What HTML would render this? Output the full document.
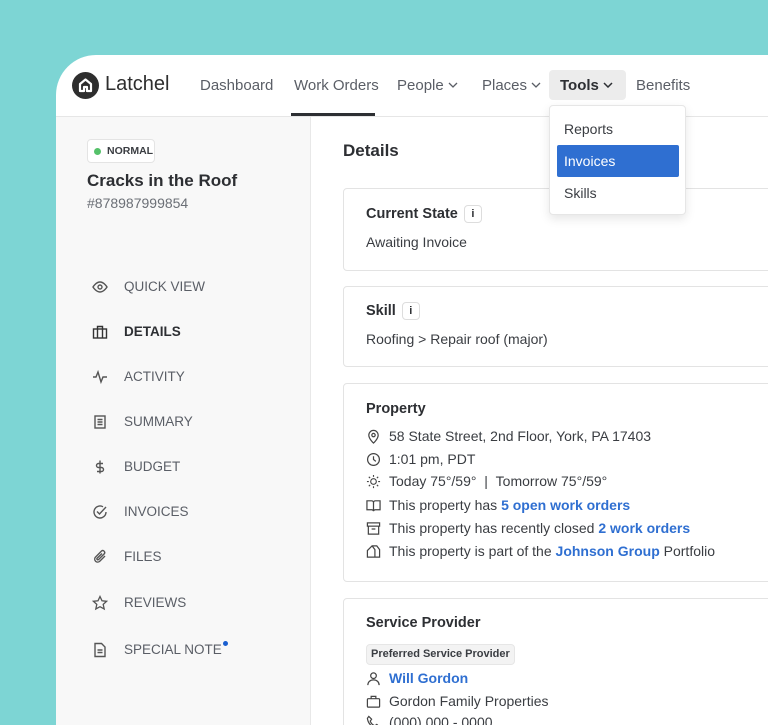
<!DOCTYPE html>
<html><head><meta charset="utf-8"><style>
*{box-sizing:border-box;margin:0;padding:0}
html{overflow:hidden}
body{width:768px;height:725px;overflow:hidden;background:#7dd5d4;font-family:"Liberation Sans",sans-serif;color:#2d2f33;position:relative}
.panel{position:absolute;left:56px;top:55px;width:712px;height:670px;background:#fff;border-top-left-radius:40px;overflow:hidden}
.hdr{position:absolute;left:0;top:0;right:0;height:62px;border-bottom:1px solid #e6e6e6}
.nav{position:absolute;top:22px;font-size:15px;color:#5a5e66;white-space:nowrap}
.nav svg{margin-left:4px;vertical-align:2px}
.side{position:absolute;left:0;top:62px;width:255px;height:700px;background:#f8f8f8;border-right:1px solid #e8e8e8}
.card{position:absolute;left:287px;width:480px;border:1px solid #e3e3e3;border-radius:4px;background:#fff}
.ct{position:absolute;left:22px;font-size:14.5px;color:#2d2f33;font-weight:bold}
.row{position:absolute;left:22px;font-size:14px;color:#3a3d42;display:flex;align-items:center;white-space:nowrap}
.row svg{margin-right:8px}
a{color:#2f6fd1;text-decoration:none;font-weight:bold}
.si{position:absolute;left:36px;font-size:13.5px;color:#5a5e66;display:flex;align-items:center}
.si svg{position:absolute;left:0;top:-8px}
.si span{position:absolute;left:32px;top:-8px;white-space:nowrap}
.info{display:inline-block;width:18px;height:18px;border:1px solid #ddd;border-radius:4px;font-size:11px;text-align:center;line-height:16px;font-weight:bold;margin-left:6px;vertical-align:middle}
</style></head><body>
<div class="panel">
<div class="hdr">
 <svg style="position:absolute;left:16px;top:17px" width="27" height="27" viewBox="0 0 27 27"><circle cx="13.5" cy="13.5" r="13.5" fill="#2e2e2e"/><path d="M8 19V12l5.5-4.5L19 12v7h-4v-4h-3v4z" fill="none" stroke="#fff" stroke-width="2.2" stroke-linejoin="round"/></svg>
 <div style="position:absolute;left:49px;top:18px;font-size:20px;color:#2e2e2e">Latchel</div>
 <div class="nav" style="left:144px">Dashboard</div>
 <div class="nav" style="left:238px">Work Orders</div>
 <div style="position:absolute;left:235px;top:58px;width:84px;height:3px;background:#2d2f33"></div>
 <div class="nav" style="left:341px">People<svg width="10" height="6" viewBox="0 0 10 6"><path d="M1 1l4 4 4-4" fill="none" stroke="#5a5e66" stroke-width="1.3"/></svg></div>
 <div class="nav" style="left:426px">Places<svg width="10" height="6" viewBox="0 0 10 6"><path d="M1 1l4 4 4-4" fill="none" stroke="#5a5e66" stroke-width="1.3"/></svg></div>
 <div style="position:absolute;left:493px;top:15px;width:77px;height:30px;background:#ececec;border-radius:4px"></div>
 <div class="nav" style="left:504px;color:#2d2f33;font-weight:bold">Tools<svg width="10" height="6" viewBox="0 0 10 6"><path d="M1 1l4 4 4-4" fill="none" stroke="#2d2f33" stroke-width="1.5"/></svg></div>
 <div class="nav" style="left:580px">Benefits</div>
</div>
<div class="side">
 <div style="position:absolute;left:31px;top:22px;width:68px;height:24px;border:1px solid #e4e4e4;border-radius:4px;background:#fff;font-size:10.5px;font-weight:bold;color:#3a3d42;line-height:22px;padding-left:19px">NORMAL<span style="position:absolute;left:6px;top:8px;width:7px;height:7px;border-radius:50%;background:#55c16a"></span></div>
 <div style="position:absolute;left:31px;top:54px;font-size:17px;font-weight:bold;color:#2d2f33">Cracks in the Roof</div>
 <div style="position:absolute;left:31px;top:78px;font-size:14px;color:#6b6f76">#878987999854</div>
 <div class="si" style="top:170px"><svg width="16" height="16" viewBox="0 0 16 16" fill="none" stroke="#555" stroke-width="1.4"><path d="M1 8s3-5 7-5 7 5 7 5-3 5-7 5-7-5-7-5z"/><circle cx="8" cy="8" r="2"/></svg><span>QUICK VIEW</span></div>
 <div class="si" style="top:215px;color:#2d2f33;font-weight:bold"><svg width="16" height="16" viewBox="0 0 16 16" fill="none" stroke="#333" stroke-width="1.4"><rect x="1.5" y="5" width="13" height="9"/><path d="M5.5 5V2.5h5V5M5.5 5v9M10.5 5v9"/></svg><span>DETAILS</span></div>
 <div class="si" style="top:260px"><svg width="16" height="16" viewBox="0 0 16 16" fill="none" stroke="#555" stroke-width="1.4"><path d="M1 8h3l2-5 3 10 2-5h4"/></svg><span>ACTIVITY</span></div>
 <div class="si" style="top:305px"><svg width="16" height="16" viewBox="0 0 16 16" fill="none" stroke="#555" stroke-width="1.4"><rect x="3" y="2" width="10" height="12"/><path d="M5.5 5.5h5M5.5 8h5M5.5 10.5h5"/></svg><span>SUMMARY</span></div>
 <div class="si" style="top:350px"><svg width="16" height="16" viewBox="0 0 16 16" fill="none" stroke="#555" stroke-width="1.4"><path d="M11 4.5H6.5a2 2 0 000 4h3a2 2 0 010 4H5M8 1.5v13"/></svg><span>BUDGET</span></div>
 <div class="si" style="top:395px"><svg width="16" height="16" viewBox="0 0 16 16" fill="none" stroke="#555" stroke-width="1.4"><path d="M14 8a6 6 0 11-3-5.2"/><path d="M5 7.5l2.5 2.5L14 3"/></svg><span>INVOICES</span></div>
 <div class="si" style="top:440px"><svg width="16" height="16" viewBox="0 0 16 16" fill="none" stroke="#555" stroke-width="1.4"><path d="M13 7l-5.5 5.5a3 3 0 01-4.2-4.2L9.5 2a2 2 0 012.8 2.8L6.5 10.6a1 1 0 01-1.4-1.4L10 4.5"/></svg><span>FILES</span></div>
 <div class="si" style="top:486px"><svg width="16" height="16" viewBox="0 0 16 16" fill="none" stroke="#555" stroke-width="1.3"><path d="M8 1.5l2 4.3 4.6.5-3.4 3.1 1 4.6L8 11.7 3.8 14l1-4.6L1.4 6.3 6 5.8z"/></svg><span>REVIEWS</span></div>
 <div class="si" style="top:533px"><svg width="16" height="16" viewBox="0 0 16 16" fill="none" stroke="#555" stroke-width="1.4"><path d="M3 1.5h6.5L13 5v9.5H3z"/><path d="M5.5 8h5M5.5 10.5h5"/></svg><span>SPECIAL NOTE<i style="position:absolute;left:99px;top:-1px;width:5px;height:5px;border-radius:50%;background:#1a5fd0"></i></span></div>
</div>
<div style="position:absolute;left:287px;top:86px;font-size:17px;font-weight:bold;color:#2d2f33">Details</div>
<div class="card" style="top:133px;height:83px"><div class="ct" style="top:16px">Current State<span class="info">i</span></div><div class="row" style="top:45px">Awaiting Invoice</div></div>
<div class="card" style="top:231px;height:81px"><div class="ct" style="top:15px">Skill<span class="info">i</span></div><div class="row" style="top:44px">Roofing &gt; Repair roof (major)</div></div>
<div class="card" style="top:328px;height:199px">
 <div class="ct" style="top:17px">Property</div>
 <div class="row" style="top:44px"><svg width="15" height="15" viewBox="0 0 16 16" fill="none" stroke="#444" stroke-width="1.3"><path d="M8 15s5-4.5 5-8.5a5 5 0 00-10 0C3 10.5 8 15 8 15z"/><circle cx="8" cy="6.5" r="1.8"/></svg>58 State Street, 2nd Floor, York, PA 17403</div>
 <div class="row" style="top:67px"><svg width="15" height="15" viewBox="0 0 16 16" fill="none" stroke="#444" stroke-width="1.3"><circle cx="8" cy="8" r="6.3"/><path d="M8 4.5V8l2.5 2"/></svg>1:01 pm, PDT</div>
 <div class="row" style="top:89px"><svg width="15" height="15" viewBox="0 0 16 16" fill="none" stroke="#444" stroke-width="1.2"><circle cx="8" cy="8" r="3"/><path d="M8 1v2M8 13v2M1 8h2M13 8h2M3 3l1.4 1.4M11.6 11.6L13 13M3 13l1.4-1.4M11.6 4.4L13 3"/></svg>Today 75°/59° &nbsp;| &nbsp;Tomorrow 75°/59°</div>
 <div class="row" style="top:113px"><svg width="15" height="15" viewBox="0 0 16 16" fill="none" stroke="#444" stroke-width="1.3"><path d="M1 3h5a2 2 0 012 2v9a2 2 0 00-2-1.5H1zM15 3h-5a2 2 0 00-2 2v9a2 2 0 012-1.5h5z"/></svg>This property has&nbsp;<a>5 open work orders</a></div>
 <div class="row" style="top:136px"><svg width="15" height="15" viewBox="0 0 16 16" fill="none" stroke="#444" stroke-width="1.3"><rect x="1.5" y="2" width="13" height="3.5"/><path d="M2.5 5.5V14h11V5.5M6 8.5h4"/></svg>This property has recently closed&nbsp;<a>2 work orders</a></div>
 <div class="row" style="top:159px"><svg width="15" height="15" viewBox="0 0 16 16" fill="none" stroke="#444" stroke-width="1.3"><path d="M1.5 14V7l5-5h5l3 4v8zM6.5 2l3 4v8"/></svg>This property is part of the&nbsp;<a>Johnson Group</a>&nbsp;Portfolio</div>
</div>
<div class="card" style="top:543px;height:200px">
 <div class="ct" style="top:16px">Service Provider</div>
 <div style="position:absolute;left:22px;top:45px;height:21px;padding:0 4px;background:#f3f3f3;border:1px solid #e6e6e6;border-radius:4px;font-size:11px;font-weight:bold;line-height:19px;color:#3a3d42">Preferred Service Provider</div>
 <div class="row" style="top:71px"><svg width="15" height="15" viewBox="0 0 16 16" fill="none" stroke="#444" stroke-width="1.3"><circle cx="8" cy="5" r="3"/><path d="M2 15c0-3.5 2.7-5.5 6-5.5s6 2 6 5.5"/></svg><a>Will Gordon</a></div>
 <div class="row" style="top:94px"><svg width="15" height="15" viewBox="0 0 16 16" fill="none" stroke="#444" stroke-width="1.3"><rect x="1.5" y="5" width="13" height="9" rx="1"/><path d="M5.5 5V2.5h5V5"/></svg>Gordon Family Properties</div>
 <div class="row" style="top:115px"><svg width="15" height="15" viewBox="0 0 16 16" fill="none" stroke="#444" stroke-width="1.3"><path d="M3 1.5l3 3-1.5 2a8 8 0 005 5l2-1.5 3 3-2 2C7 14 2 9 1.5 3.5z"/></svg>(000) 000 - 0000</div>
</div>
<div style="position:absolute;left:493px;top:50px;width:137px;height:110px;background:#fff;border:1px solid #e6e6e6;border-radius:4px;box-shadow:0 4px 10px rgba(0,0,0,.1)">
 <div style="position:absolute;left:14px;top:15px;font-size:14px;color:#3a3d42">Reports</div>
 <div style="position:absolute;left:7px;top:39px;width:122px;height:32px;background:#2f6fd1;border-radius:2px;color:#fff;font-size:14px;line-height:32px;padding-left:7px">Invoices</div>
 <div style="position:absolute;left:14px;top:79px;font-size:14px;color:#3a3d42">Skills</div>
</div>
</div>
</body></html>
